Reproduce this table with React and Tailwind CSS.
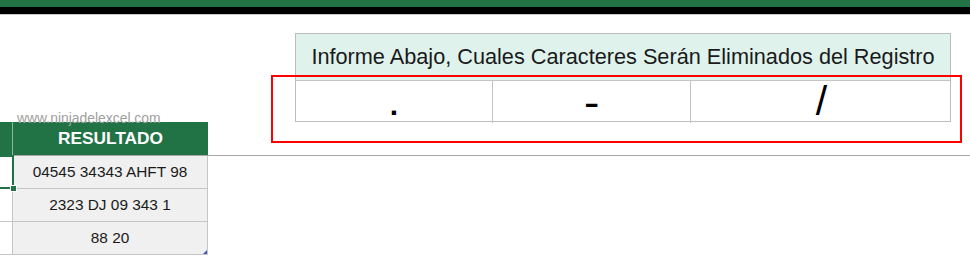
const results = ["04545 34343 AHFT 98", "2323 DJ 09 343 1", "88 20"];

export default function App() {
  return (
    <div
      className="relative w-[970px] h-[273px] bg-white overflow-hidden text-[#1a1a1a]"
      style={{ fontFamily: '"Liberation Sans", Arial, sans-serif' }}
    >
      {/* ribbon edge */}
      <div className="h-[7px] bg-[#217346]" />
      <div className="h-[7px] bg-black" />
      <div className="h-px bg-[#c8c8c8]" />

      {/* characters-to-remove box */}
      <div className="pl-[295px] pt-[18px]">
        <div className="w-[656px] border border-[#bdbdbd]">
          <div className="h-[47px] bg-[#dff3ec] border-b border-[#c4c4c4] flex items-center justify-center text-[21.7px] pt-[1px]">
            Informe Abajo, Cuales Caracteres Serán Eliminados del Registro
          </div>
          <div className="h-[40px] grid grid-cols-[197px_198px_1fr] text-black leading-none">
            <div className="border-r border-[#c4c4c4] flex items-end justify-center pb-[3px] text-[30px] font-bold">.</div>
            <div className="border-r border-[#c4c4c4] flex items-end justify-center pb-[5px] text-[28px] font-bold">
              <span className="inline-block scale-x-[1.6]">-</span>
            </div>
            <div className="flex items-end justify-center pb-[1px] text-[41px] pl-[2px]">/</div>
          </div>
        </div>
      </div>

      {/* result table; the header row carries the sheet gridline across the page */}
      <div className="flex border-b border-[#a6a6a6]">
        <div className="w-[208px] h-[33px] flex bg-[#217346]">
          <div className="w-[13px] border-r border-[#8fb5a0]" />
          <div className="flex-1 flex items-center justify-center text-white font-bold text-[17.3px] pt-[1px]">
            RESULTADO
          </div>
        </div>
      </div>
      <div className="w-[208px] flex flex-col">
        {results.map((r) => (
          <div key={r} className="h-[33px] flex border-b border-[#c6c6c6]">
            <div className="w-[13px] border-r border-[#c6c6c6] bg-white" />
            <div className="flex-1 flex items-center justify-center bg-[#f0f0f0] border-r border-[#c6c6c6] text-[15.4px]">
              {r}
            </div>
          </div>
        ))}
      </div>

      {/* active cell with fill handle */}
      <div className="absolute left-0 top-[155px] w-[14px] h-[34px] border-2 border-l-0 border-[#217346]" />
      <div className="absolute left-[11px] top-[186px] w-[5px] h-[5px] bg-[#217346] outline outline-1 outline-white" />
      {/* table resize corner */}
      <div className="absolute left-[203px] top-[250px] w-0 h-0 border-l-[4px] border-l-transparent border-b-[4px] border-b-[#3b5bb5]" />

      {/* red highlight frame */}
      <div className="absolute left-[271px] top-[75px] w-[691px] h-[68px] border-2 border-[#ff0000]" />

      {/* watermark */}
      <div className="absolute left-[17px] top-[108px] text-[13.9px] text-[#a0a0a0]">www.ninjadelexcel.com</div>
    </div>
  );
}
